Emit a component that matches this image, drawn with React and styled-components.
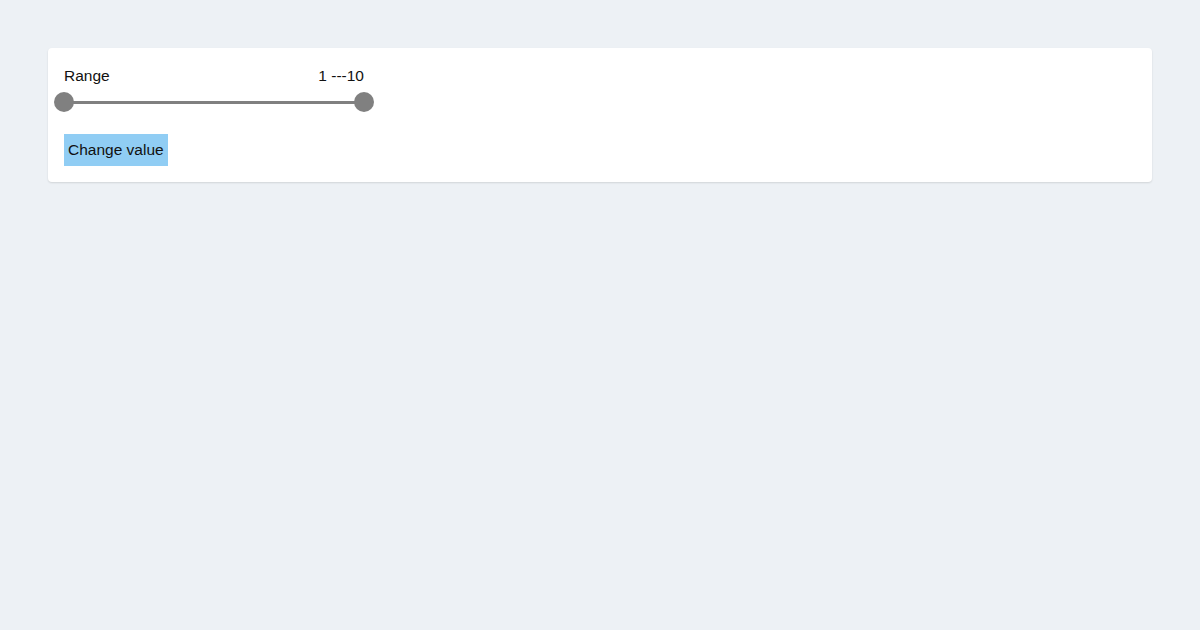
import React, { useState } from 'react';
import styled, { createGlobalStyle } from 'styled-components';

const GlobalStyle = createGlobalStyle`
  html, body {
    margin: 0;
    padding: 0;
    background: #edf1f5;
    font-family: 'Liberation Sans', Arial, sans-serif;
    color: #111;
  }
`;

const Page = styled.div`
  min-height: 630px;
  box-sizing: border-box;
  padding: 48px;
`;

const Card = styled.div`
  background: #fff;
  border-radius: 4px;
  box-shadow: 0 1px 2px rgba(0, 0, 0, 0.12);
  padding: 16px;
`;

const RangeBox = styled.div`
  width: 300px;
`;

const Header = styled.div`
  display: flex;
  justify-content: space-between;
  font-size: 15.5px;
  line-height: 24px;
  margin-bottom: 4px;
`;

const Track = styled.div`
  position: relative;
  height: 20px;

  &::before {
    content: '';
    position: absolute;
    left: 0;
    right: 0;
    top: 9px;
    height: 3px;
    background: #808080;
  }
`;

const Thumb = styled.span`
  position: absolute;
  top: 0;
  left: ${({ pos }) => pos}%;
  width: 20px;
  height: 20px;
  margin-left: -10px;
  border-radius: 50%;
  background: #808080;
`;

const Button = styled.button`
  margin-top: 22px;
  height: 32px;
  padding: 0 4px;
  border: none;
  border-radius: 0;
  background: #90cdf4;
  font-family: inherit;
  font-size: 15.5px;
  color: #111;
  cursor: pointer;
`;

export default function App() {
  const [range, setRange] = useState([1, 10]);
  const min = 1;
  const max = 10;
  const toPos = (v) => ((v - min) / (max - min)) * 100;

  return (
    <>
      <GlobalStyle />
      <Page>
        <Card>
          <RangeBox>
            <Header>
              <span>Range</span>
              <span>
                {range[0]} ---{range[1]}
              </span>
            </Header>
            <Track>
              <Thumb pos={toPos(range[0])} />
              <Thumb pos={toPos(range[1])} />
            </Track>
          </RangeBox>
          <Button onClick={() => setRange([1, 10])}>Change value</Button>
        </Card>
      </Page>
    </>
  );
}
